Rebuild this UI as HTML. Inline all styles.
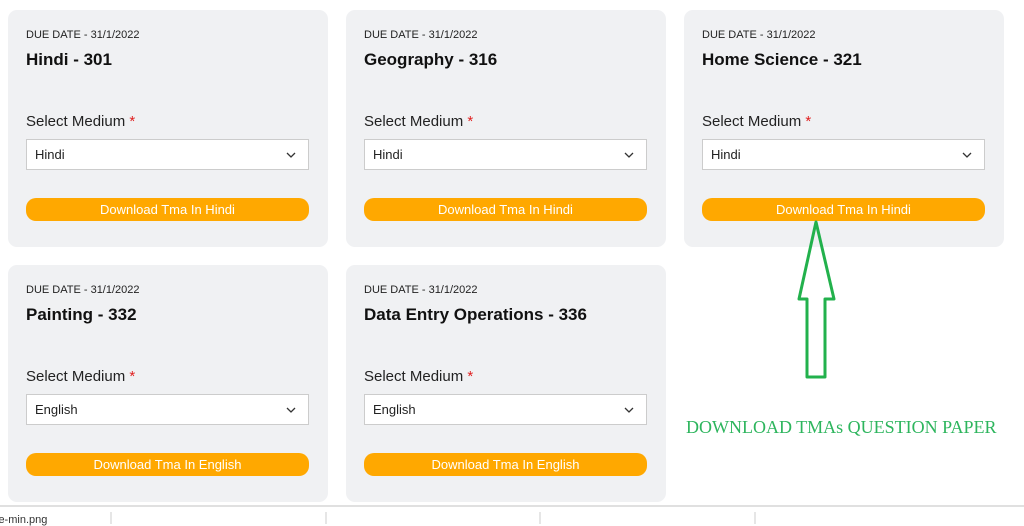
<!DOCTYPE html>
<html><head><meta charset="utf-8"><style>
body{margin:0;width:1024px;height:524px;background:#fff;position:relative;overflow:hidden;font-family:"Liberation Sans",sans-serif}
.card{position:absolute;width:320px;height:237px;background:#f0f1f3;border-radius:9px}
.due{position:absolute;left:18px;top:19px;font-size:11px;color:#222}
.title{position:absolute;left:18px;top:40px;font-size:17px;font-weight:bold;color:#111}
.lbl{position:absolute;left:18px;top:103px;font-size:15px;color:#222}
.lbl span{color:#e02020}
.sel{position:absolute;left:18px;top:129px;width:283px;height:31px;background:#fff;border:1px solid #ccc;box-sizing:border-box;font-size:13px;color:#222;line-height:30px;padding-left:8px}
.sel svg{position:absolute;right:12px;top:12px}
.btn{position:absolute;left:18px;top:188px;width:283px;height:23px;background:#ffa800;border-radius:10px;color:#fff;font-size:13px;text-align:center;line-height:23px}
</style></head><body>
<div class="card" style="left:8px;top:10px"><div class="due">DUE DATE - 31/1/2022</div><div class="title">Hindi - 301</div><div class="lbl">Select Medium <span>*</span></div><div class="sel">Hindi<svg width="10" height="6"><path d="M1 1l4 4 4-4" stroke="#333" fill="none" stroke-width="1.3"/></svg></div><div class="btn">Download Tma In Hindi</div></div>
<div class="card" style="left:346px;top:10px"><div class="due">DUE DATE - 31/1/2022</div><div class="title">Geography - 316</div><div class="lbl">Select Medium <span>*</span></div><div class="sel">Hindi<svg width="10" height="6"><path d="M1 1l4 4 4-4" stroke="#333" fill="none" stroke-width="1.3"/></svg></div><div class="btn">Download Tma In Hindi</div></div>
<div class="card" style="left:684px;top:10px"><div class="due">DUE DATE - 31/1/2022</div><div class="title">Home Science - 321</div><div class="lbl">Select Medium <span>*</span></div><div class="sel">Hindi<svg width="10" height="6"><path d="M1 1l4 4 4-4" stroke="#333" fill="none" stroke-width="1.3"/></svg></div><div class="btn">Download Tma In Hindi</div></div>
<div class="card" style="left:8px;top:265px"><div class="due">DUE DATE - 31/1/2022</div><div class="title">Painting - 332</div><div class="lbl">Select Medium <span>*</span></div><div class="sel">English<svg width="10" height="6"><path d="M1 1l4 4 4-4" stroke="#333" fill="none" stroke-width="1.3"/></svg></div><div class="btn">Download Tma In English</div></div>
<div class="card" style="left:346px;top:265px"><div class="due">DUE DATE - 31/1/2022</div><div class="title">Data Entry Operations - 336</div><div class="lbl">Select Medium <span>*</span></div><div class="sel">English<svg width="10" height="6"><path d="M1 1l4 4 4-4" stroke="#333" fill="none" stroke-width="1.3"/></svg></div><div class="btn">Download Tma In English</div></div>
<svg style="position:absolute;left:0;top:0" width="1024" height="524"><path d="M816 222 L834 299 L825 299 L825 377 L807 377 L807 299 L799 299 Z" fill="none" stroke="#22b14c" stroke-width="3" stroke-linejoin="round"/>
<line x1="0" y1="506" x2="1024" y2="506" stroke="#e0e0e0" stroke-width="2"/>
<line x1="111" y1="512" x2="111" y2="524" stroke="#ccc"/><line x1="326" y1="512" x2="326" y2="524" stroke="#ccc"/><line x1="540" y1="512" x2="540" y2="524" stroke="#ccc"/><line x1="755" y1="512" x2="755" y2="524" stroke="#ccc"/></svg>
<div style="position:absolute;left:686px;top:417px;font-family:'Liberation Serif',serif;font-size:18px;color:#2db55d">DOWNLOAD TMAs QUESTION PAPER</div>
<div style="position:absolute;left:-4px;top:514px;font-size:11px;color:#333">le-min.png</div>
</body></html>
